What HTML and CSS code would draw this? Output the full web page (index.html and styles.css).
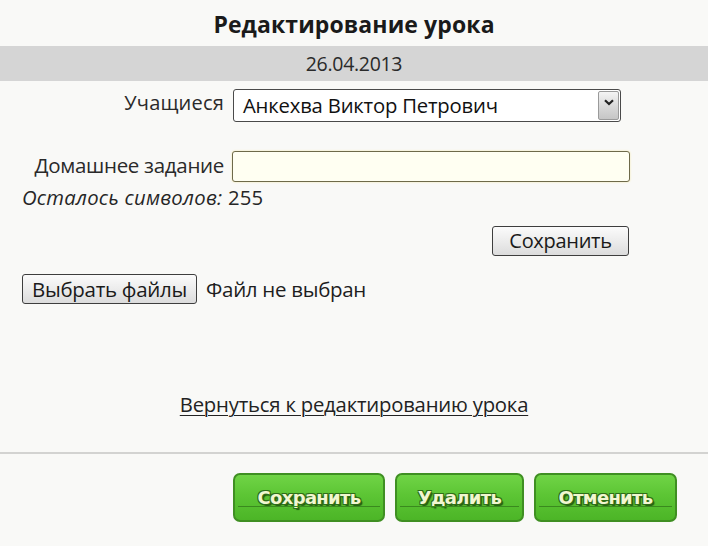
FILE: index.html
```html
<!DOCTYPE html>
<html lang="ru">
<head>
<meta charset="utf-8">
<title>Редактирование урока</title>
<link rel="stylesheet" href="styles.css">
</head>
<body>
<div class="page">
  <h1 class="title">Редактирование урока</h1>
  <div class="datebar">26.04.2013</div>

  <div class="row row-student">
    <label class="label">Учащиеся</label>
    <div class="select">
      <span class="select-value">Анкехва Виктор Петрович</span>
      <span class="select-arrow">
        <svg width="10" height="7" viewBox="0 0 10 7"><path d="M1 1.2 L5 5 L9 1.2" fill="none" stroke="#222" stroke-width="2.2"/></svg>
      </span>
    </div>
  </div>

  <div class="row row-homework">
    <label class="label">Домашнее задание</label>
    <input class="text-input" type="text">
  </div>

  <div class="remaining"><em>Осталось символов:</em> 255</div>

  <div class="save-row">
    <button class="btn">Сохранить</button>
  </div>

  <div class="file-row">
    <button class="btn btn-file">Выбрать файлы</button>
    <span class="file-status">Файл не выбран</span>
  </div>

  <div class="back-row">
    <a class="back-link" href="#">Вернуться к редактированию урока</a>
  </div>

  <div class="separator"></div>

  <div class="actions">
    <button class="gbtn gbtn-save">Сохранить</button>
    <button class="gbtn gbtn-delete">Удалить</button>
    <button class="gbtn gbtn-cancel">Отменить</button>
  </div>
</div>
</body>
</html>
```

FILE: styles.css
```css
html, body {
  margin: 0;
  padding: 0;
  background: #f9f9f7;
}

.page {
  width: 708px;
  height: 546px;
  font-family: "Open Sans", "Noto Sans", "DejaVu Sans", sans-serif;
  color: #1e1e1e;
  overflow: hidden;
}

.title {
  margin: 0;
  height: 46px;
  line-height: 48px;
  text-align: center;
  font-size: 23px;
  font-weight: 700;
  color: #1a1a1a;
  letter-spacing: 0.1px;
}

.datebar {
  height: 35px;
  line-height: 35px;
  background: #d5d5d5;
  text-align: center;
  font-size: 19.5px;
  color: #2a2a2a;
  letter-spacing: -0.3px;
}

.row {
  display: flex;
  align-items: center;
}

.label {
  width: 224px;
  text-align: right;
  font-size: 20.5px;
  color: #2a2a2a;
  letter-spacing: -0.3px;
  white-space: nowrap;
}

.row-student {
  margin-top: 7px;
  height: 34px;
}

.row-student .label {
  font-size: 20px;
  letter-spacing: 0.2px;
  margin-top: -5px;
}

.select {
  margin-left: 9px;
  width: 386px;
  height: 31px;
  border: 1px solid #4a4a4a;
  border-radius: 3px;
  background: #ffffff;
  display: flex;
  align-items: center;
  justify-content: space-between;
  box-sizing: content-box;
}

.select-value {
  padding-left: 9px;
  font-size: 20.3px;
  color: #111;
  letter-spacing: -0.2px;
}

.select-arrow {
  width: 21px;
  height: 29px;
  margin-right: 1px;
  border: 1px solid #9a9a9a;
  border-radius: 2px;
  background: linear-gradient(#f4f4f4, #d8d8d8 55%, #c6c6c6);
  display: flex;
  align-items: flex-start;
  justify-content: center;
  padding-top: 7px;
  box-sizing: border-box;
}

.row-homework {
  margin-top: 28px;
  height: 32px;
}

.row-homework .label {
  margin-top: -3px;
}

.text-input {
  margin: 0 0 0 8px;
  width: 398px;
  height: 31px;
  box-sizing: border-box;
  border: 1px solid #6e6a4a;
  border-radius: 3px;
  background: #fffff2;
  box-shadow: 0 0 2px #f3e6a0;
  outline: none;
  padding: 0 6px;
  font-family: inherit;
  font-size: 17px;
}

.remaining {
  margin: 3px 0 0 22px;
  height: 25px;
  line-height: 25px;
  font-size: 20.3px;
  color: #262626;
  letter-spacing: 0.25px;
}

.remaining em {
  font-style: italic;
}

.save-row {
  display: flex;
  justify-content: flex-end;
  padding-right: 79px;
  margin-top: 16px;
}

.btn {
  height: 30px;
  padding: 0 12px;
  border: 1px solid #3e3e3e;
  border-radius: 3px;
  background: linear-gradient(#fbfbfb, #ececec 50%, #dcdcdc);
  font-family: inherit;
  font-size: 20px;
  color: #1a1a1a;
  letter-spacing: -0.3px;
  line-height: 26px;
  cursor: pointer;
}

.save-row .btn {
  width: 137px;
}

.file-row {
  display: flex;
  align-items: center;
  margin: 18px 0 0 22px;
}

.btn-file {
  width: 175px;
  padding: 0;
  font-size: 20.5px;
}

.file-status {
  margin-left: 9px;
  font-size: 20.5px;
  color: #1e1e1e;
  letter-spacing: -0.3px;
}

.back-row {
  margin-top: 87px;
  text-align: center;
  height: 26px;
  line-height: 26px;
}

.back-link {
  font-size: 20.3px;
  color: #222;
  text-decoration: underline;
  text-underline-offset: 3px;
  text-decoration-thickness: 1px;
  letter-spacing: -0.2px;
}

.separator {
  margin-top: 35px;
  height: 2px;
  background: #d3d3d1;
}

.actions {
  display: flex;
  justify-content: flex-end;
  gap: 10px;
  padding-right: 31px;
  margin-top: 19px;
}

.gbtn {
  position: relative;
  height: 49px;
  border: 2px solid #3f8f22;
  border-radius: 7px;
  background: linear-gradient(#70d446, #5cc534 45%, #4cb527);
  font-family: "DejaVu Sans", "Open Sans", sans-serif;
  font-weight: 700;
  font-size: 18px;
  letter-spacing: -0.7px;
  color: #f1f6d0;
  text-shadow:
    1px 1px 0 #2e6e18, -1px -1px 0 #2e6e18,
    1px -1px 0 #2e6e18, -1px 1px 0 #2e6e18,
    2px 2px 1px #245a12;
  padding: 0;
  cursor: pointer;
}

.gbtn::after {
  content: "";
  position: absolute;
  left: 3px;
  right: 3px;
  top: 31px;
  height: 1px;
  background: #3a8a1e;
}

.gbtn-save { width: 152px; }
.gbtn-delete { width: 129px; }
.gbtn-cancel { width: 143px; }
```
